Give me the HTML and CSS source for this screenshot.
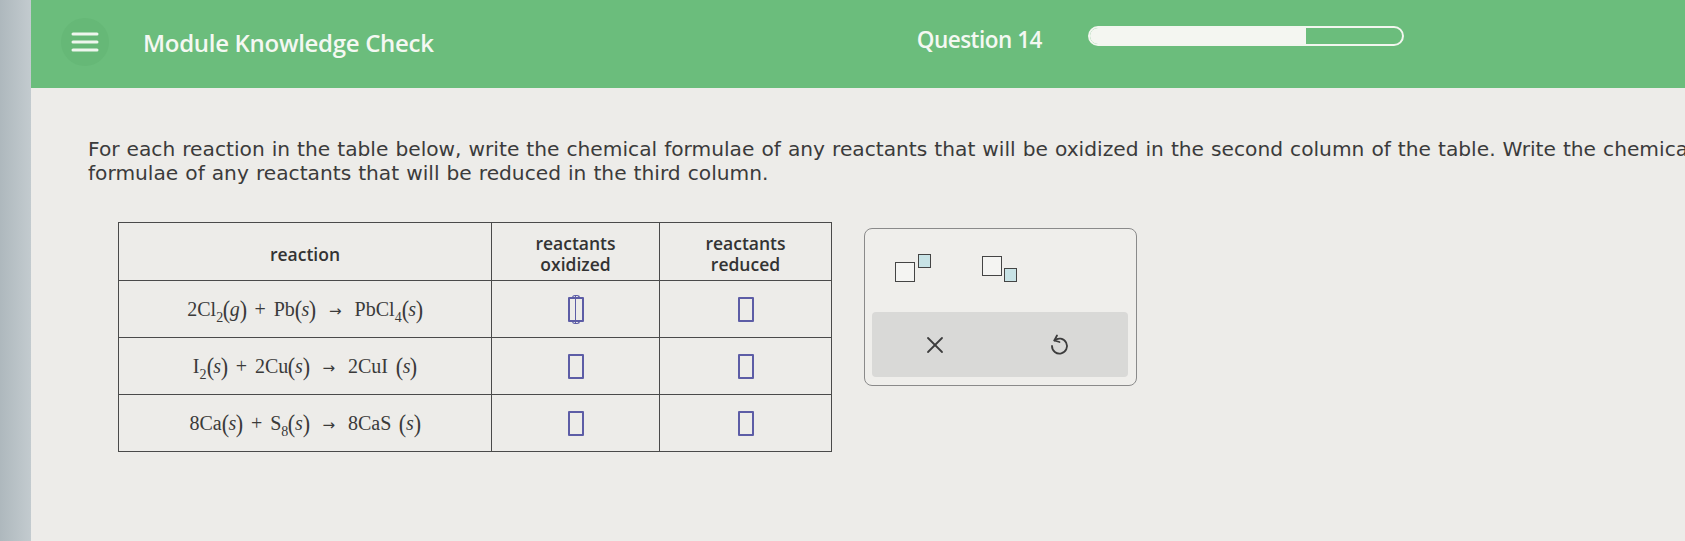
FILE: index.html
```html
<!DOCTYPE html>
<html>
<head>
<meta charset="utf-8">
<link rel="stylesheet" href="styles.css">
</head>
<body>
<div class="page">
  <div class="bezel"></div>
  <div class="main">
    <header class="topbar">
      <div class="menu-btn">
        <svg width="30" height="24" viewBox="0 0 30 24"><g stroke="#eef6ee" stroke-width="3" stroke-linecap="round"><line x1="3" y1="4" x2="27" y2="4"/><line x1="3" y1="12" x2="27" y2="12"/><line x1="3" y1="20" x2="27" y2="20"/></g></svg>
      </div>
      <div class="title">Module Knowledge Check</div>
      <div class="question">Question 14</div>
      <div class="progress"><div class="progress-fill"></div></div>
    </header>
    <section class="content">
      <p class="prompt">For each reaction in the table below, write the chemical formulae of any reactants that will be oxidized in the second column of the table. Write the chemical formulae of any reactants that will be reduced in the third column.</p>
      <div class="work">
        <table class="rx">
          <thead>
            <tr><th class="c1">reaction</th><th class="c2">reactants<br>oxidized</th><th class="c3">reactants<br>reduced</th></tr>
          </thead>
          <tbody>
            <tr>
              <td class="eq">2Cl<sub>2</sub><span class="p">(</span><i>g</i><span class="p">)</span> + Pb<span class="p">(</span><i>s</i><span class="p">)</span> <span class="arr">→</span> PbCl<sub>4</sub><span class="p">(</span><i>s</i><span class="p">)</span></td>
              <td><span class="box active"><span class="caret"></span></span></td>
              <td><span class="box"></span></td>
            </tr>
            <tr>
              <td class="eq">I<sub>2</sub><span class="p">(</span><i>s</i><span class="p">)</span> + 2Cu<span class="p">(</span><i>s</i><span class="p">)</span> <span class="arr">→</span> 2CuI <span class="p">(</span><i>s</i><span class="p">)</span></td>
              <td><span class="box"></span></td>
              <td><span class="box"></span></td>
            </tr>
            <tr>
              <td class="eq">8Ca<span class="p">(</span><i>s</i><span class="p">)</span> + S<sub>8</sub><span class="p">(</span><i>s</i><span class="p">)</span> <span class="arr">→</span> 8CaS <span class="p">(</span><i>s</i><span class="p">)</span></td>
              <td><span class="box"></span></td>
              <td><span class="box"></span></td>
            </tr>
          </tbody>
        </table>
        <div class="tools">
          <div class="tools-top">
            <div class="tool sup"><span class="big"></span><span class="small"></span></div>
            <div class="tool sub"><span class="big"></span><span class="small"></span></div>
          </div>
          <div class="tools-bottom">
            <svg class="ic" width="20" height="20" viewBox="0 0 20 20"><g stroke="#3c3c3c" stroke-width="1.8" stroke-linecap="round"><line x1="3" y1="3" x2="17" y2="17"/><line x1="17" y1="3" x2="3" y2="17"/></g></svg>
            <svg class="ic" width="22" height="24" viewBox="0 0 22 24"><g fill="none" stroke="#3c3c3c" stroke-width="1.8" stroke-linecap="round" stroke-linejoin="round"><path d="M6.5 7.5 A7.5 7.5 0 1 1 4 13"/><path d="M9 2.5 L6.3 7.5 L11.5 9"/></g></svg>
          </div>
        </div>
      </div>
    </section>
  </div>
</div>
</body>
</html>
```

FILE: styles.css
```css
* { box-sizing: border-box; }
html, body { margin: 0; padding: 0; }
body {
  width: 1685px;
  height: 541px;
  overflow: hidden;
  background: #ecebe8;
}
.page {
  display: flex;
  height: 541px;
}
.bezel {
  width: 31px;
  flex: 0 0 31px;
  background: linear-gradient(to right, #aeb8bd, #c3cbcf);
}
.main {
  flex: 0 0 1800px;
  width: 1800px;
  background: #edece9;
}
.topbar {
  height: 88px;
  background: #6bbd7c;
  display: flex;
  align-items: center;
  padding-left: 30px;
  color: #f4f8f2;
  font-family: "Open Sans", "Liberation Sans", sans-serif;
}
.menu-btn {
  width: 48px;
  height: 48px;
  border-radius: 50%;
  background: #66b877;
  display: flex;
  align-items: center;
  justify-content: center;
  margin-top: -4px;
}
.title {
  margin-left: 34px;
  font-size: 24px;
  font-weight: 600;
  letter-spacing: -0.3px;
  margin-top: -4px;
}
.question {
  margin-left: 483px;
  font-size: 22.5px;
  font-weight: 600;
  letter-spacing: -0.5px;
  margin-top: -10px;
}
.progress {
  margin-left: 46px;
  width: 316px;
  height: 20px;
  border: 2px solid #f2f6ef;
  border-radius: 10px;
  overflow: hidden;
  margin-top: -17px;
  background: #6bbd7c;
}
.progress-fill {
  width: 216px;
  height: 100%;
  background: #f4f6f1;
}
.content {
  padding-left: 57px;
  padding-top: 49px;
}
.prompt {
  margin: 0;
  width: 1690px;
  font-family: "DejaVu Sans", Verdana, sans-serif;
  font-size: 20.2px;
  word-spacing: 0.6px;
  line-height: 24px;
  color: #3b3b3b;
}
.work {
  display: flex;
  align-items: flex-start;
  margin-top: 37px;
  margin-left: 30px;
}
.rx {
  border-collapse: collapse;
  font-family: "Open Sans", "Liberation Sans", sans-serif;
  color: #333;
}
.rx th, .rx td {
  border: 1.5px solid #4a4a4a;
  text-align: center;
  padding: 0;
}
.rx th {
  height: 58px;
  font-size: 17.5px;
  font-weight: 600;
  line-height: 21px;
  padding-top: 5px;
}
.rx td { height: 57px; }
.c1 { width: 373px; }
.c2 { width: 168px; }
.c3 { width: 172px; }
.eq {
  font-family: "Liberation Serif", "Times New Roman", serif;
  font-size: 20px;
  color: #3a3a3a;
  word-spacing: 3px;
}
.eq sub { font-size: 14px; vertical-align: -6px; line-height: 0; }
.eq i { font-style: italic; }
.eq .p { font-size: 26px; display: inline-block; transform: scale(0.85, 1); vertical-align: -2px; line-height: 20px; margin: 0 -1px; }
.eq .arr { font-family: "DejaVu Sans", sans-serif; font-size: 15px; margin: 0 5px; }
.box {
  display: inline-block;
  width: 16px;
  height: 25px;
  border: 2px solid #5d5da6;
  border-radius: 1px;
  vertical-align: middle;
  position: relative;
}
.caret {
  position: absolute;
  left: 5px;
  top: -4px;
  width: 2px;
  height: 29px;
  border-left: 1.5px solid #5d5da6;
}
.caret::before, .caret::after {
  content: "";
  position: absolute;
  left: -4px;
  width: 6px;
  height: 3px;
  border: 1px solid #5d5da6;
}
.caret::before { top: 0; border-bottom: none; border-radius: 3px 3px 0 0; }
.caret::after { bottom: 0; border-top: none; border-radius: 0 0 3px 3px; }
.tools {
  margin-left: 32px;
  margin-top: 6px;
  width: 273px;
  height: 158px;
  border: 1.5px solid #8a8a8a;
  border-radius: 8px;
  padding: 0 8px 8px 7px;
  display: flex;
  flex-direction: column;
  background: #efeeeb;
}
.tools-top {
  height: 83px;
  display: flex;
  align-items: flex-start;
  padding-left: 23px;
  padding-top: 25px;
  gap: 49px;
}
.tool { position: relative; width: 38px; height: 30px; }
.tool .big {
  position: absolute;
  width: 20px;
  height: 20px;
  border: 1.5px solid #444;
  background: #f4f4f2;
}
.tool .small {
  position: absolute;
  width: 13px;
  height: 14px;
  border: 1.5px solid #444;
  background: #c8e3e6;
}
.sup .big { left: 0; top: 8px; }
.sup .small { left: 23px; top: 0; }
.sub .big { left: 0; top: 2px; }
.sub .small { left: 22px; top: 14px; }
.tools-bottom {
  flex: 1;
  background: #d9d9d7;
  border-radius: 4px;
  display: flex;
  align-items: center;
  justify-content: flex-start;
  padding-left: 53px;
  gap: 103px;
}
.ic { display: block; }
```
